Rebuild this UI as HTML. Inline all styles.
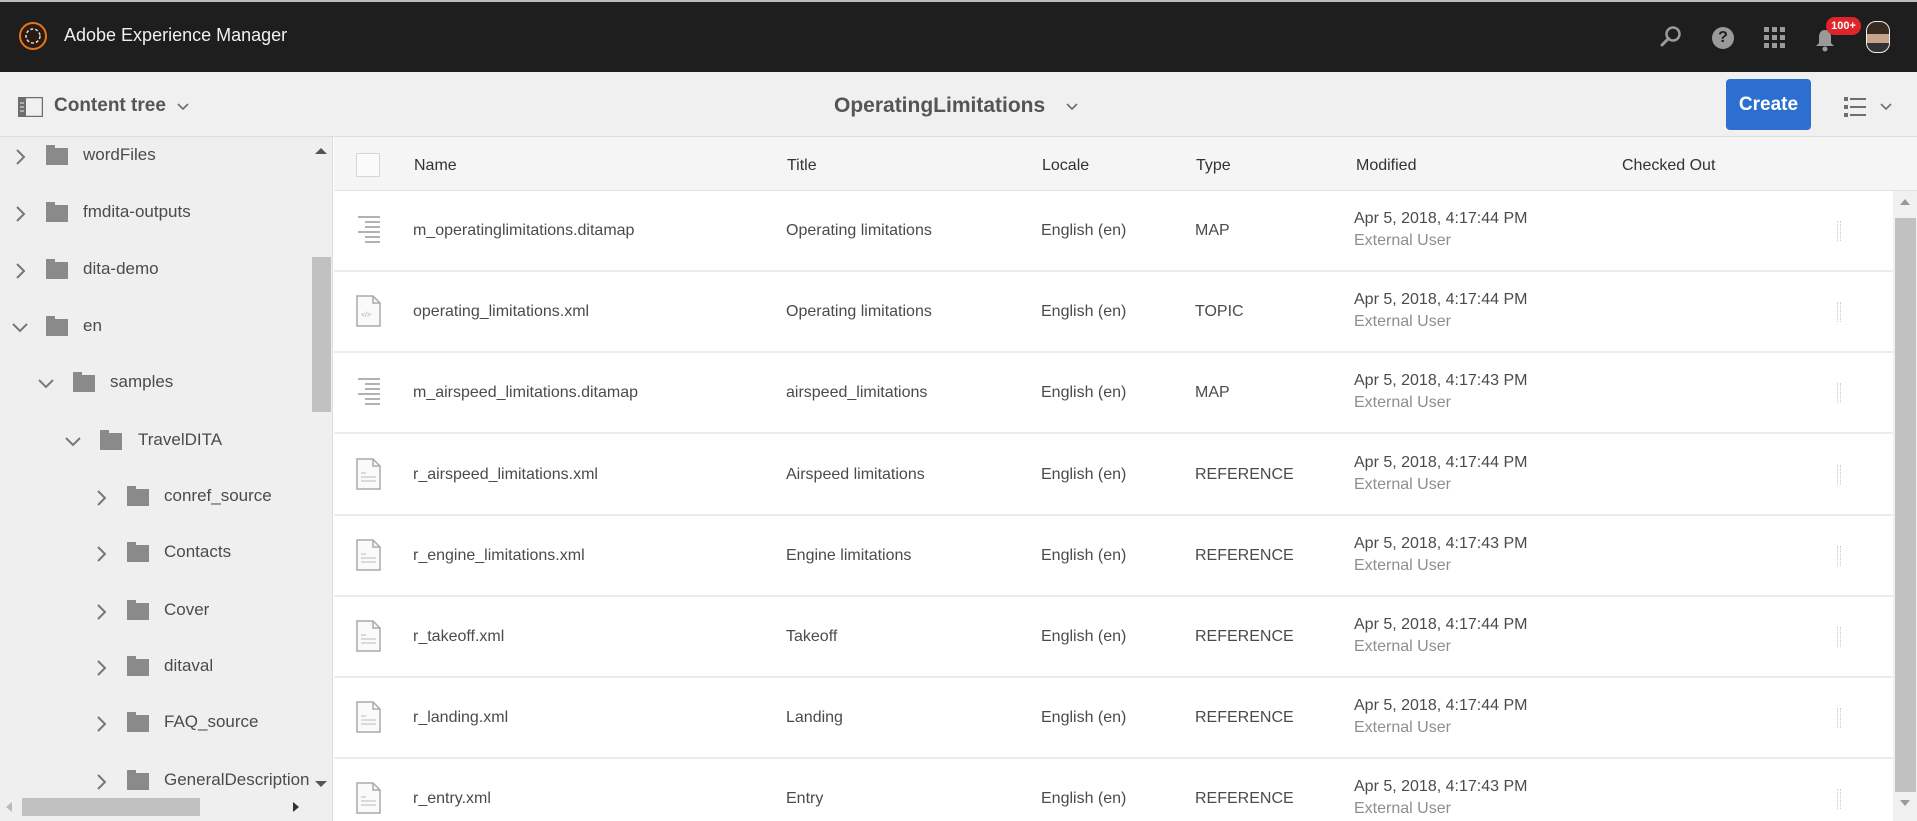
<!DOCTYPE html>
<html><head><meta charset="utf-8"><style>
*{margin:0;padding:0;box-sizing:border-box}
html,body{width:1917px;height:821px;overflow:hidden}
body{background:#fff;font-family:"Liberation Sans",sans-serif;color:#4b4b4b;position:relative}
.a{position:absolute;white-space:nowrap}
.top{left:0;top:0;width:1917px;height:72px;background:#1e1e1e;border-top:2px solid #bdbdbd}
.tb{left:0;top:72px;width:1917px;height:65px;background:#f0f0f0;border-bottom:1px solid #ddd}
.side{left:0;top:137px;width:333px;height:684px;background:#efefef;border-right:1px solid #ddd;overflow:hidden}
.hdr{left:334px;top:137px;width:1583px;height:54px;background:#f5f5f5;border-bottom:1px solid #e4e4e4}
.hdr span{position:absolute;top:20px;font-size:16px;color:#323232}
.row{position:absolute;left:334px;width:1559px;height:81px;border-bottom:2px solid #ececec;background:#fff}
.row span{position:absolute;font-size:16px;color:#4b4b4b;top:31px}
.row .m1{top:19px}.row .m2{top:41px;color:#8e8e8e}
.si{position:absolute;height:24px;font-size:17px;color:#4b4b4b}
.fold{position:absolute;width:22px;height:17px;background:#8a8a8a;top:3px}
.fold:before{content:"";position:absolute;left:0;top:-3px;width:9px;height:3px;background:#8a8a8a}
.chev{position:absolute;top:0;width:20px;height:20px}
</style></head><body>
<div class="a top"></div>
<svg class="a" style="left:18px;top:21px" width="30" height="30" viewBox="0 0 30 30"><circle cx="15" cy="15" r="13" fill="#2a1a10" stroke="#e8751a" stroke-width="2"/><circle cx="15" cy="15" r="7" fill="none" stroke="#ddd" stroke-width="1.5" stroke-dasharray="3 2"/></svg>
<div class="a" style="left:64px;top:25px;font-size:18px;color:#f0f0f0">Adobe Experience Manager</div>
<svg class="a" style="left:1659px;top:25px" width="24" height="24" viewBox="0 0 24 24"><circle cx="14" cy="9" r="6.5" fill="none" stroke="#9a9a9a" stroke-width="2.5"/><path d="M9.5 13.5L3 20" stroke="#9a9a9a" stroke-width="3" stroke-linecap="round"/></svg>
<div class="a" style="left:1712px;top:27px;width:22px;height:22px;border-radius:50%;background:#9a9a9a;color:#1e1e1e;font-weight:bold;font-size:16px;text-align:center;line-height:22px">?</div>
<svg class="a" style="left:1764px;top:27px" width="22" height="22"><g fill="#9a9a9a"><rect x="0" y="0" width="5" height="5"/><rect x="8" y="0" width="5" height="5"/><rect x="16" y="0" width="5" height="5"/><rect x="0" y="8" width="5" height="5"/><rect x="8" y="8" width="5" height="5"/><rect x="16" y="8" width="5" height="5"/><rect x="0" y="16" width="5" height="5"/><rect x="8" y="16" width="5" height="5"/><rect x="16" y="16" width="5" height="5"/></g></svg>
<svg class="a" style="left:1814px;top:28px" width="22" height="24" viewBox="0 0 22 24"><path d="M11 2c-4 0-6 3-6 7v6l-3 3h18l-3-3V9c0-4-2-7-6-7z" fill="#9a9a9a"/><circle cx="11" cy="21" r="2.5" fill="#9a9a9a"/></svg>
<div class="a" style="left:1826px;top:17px;width:35px;height:18px;border-radius:9px;background:#e0242b;color:#fff;font-size:11px;font-weight:bold;text-align:center;line-height:18px">100+</div>
<div class="a" style="left:1866px;top:21px;width:24px;height:32px;border-radius:10px;background:linear-gradient(#3a2a22 40%,#c9a48c 40%,#c9a48c 70%,#333 70%);border:1px solid #eee"></div>

<div class="a tb"></div>
<svg class="a" style="left:18px;top:97px" width="25" height="20"><rect x="0.5" y="0.5" width="24" height="19" fill="none" stroke="#6e6e6e" stroke-width="1.5"/><rect x="0" y="0" width="8" height="20" fill="#6e6e6e"/><g stroke="#f0f0f0"><line x1="2" y1="6" x2="6" y2="6"/><line x1="2" y1="10" x2="6" y2="10"/><line x1="2" y1="14" x2="6" y2="14"/></g></svg>
<div class="a" style="left:54px;top:95px;font-size:19px;font-weight:bold;color:#555">Content tree</div>
<svg class="a" style="left:177px;top:103px" width="12" height="8"><path d="M1 1l5 5 5-5" fill="none" stroke="#6e6e6e" stroke-width="1.6"/></svg>
<div class="a" style="left:834px;top:94px;font-size:21px;font-weight:bold;color:#555">OperatingLimitations</div>
<svg class="a" style="left:1066px;top:103px" width="12" height="8"><path d="M1 1l5 5 5-5" fill="none" stroke="#6e6e6e" stroke-width="1.6"/></svg>
<div class="a" style="left:1726px;top:79px;width:85px;height:51px;background:#2d6fd0;border-radius:4px;color:#fff;font-size:19px;font-weight:bold;text-align:center;line-height:51px">Create</div>
<svg class="a" style="left:1844px;top:97px" width="22" height="21"><g fill="#6e6e6e"><rect x="0" y="0" width="4" height="4"/><rect x="6" y="1" width="16" height="2"/><rect x="0" y="8" width="4" height="4"/><rect x="6" y="9" width="16" height="2"/><rect x="0" y="16" width="4" height="4"/><rect x="6" y="17" width="16" height="2"/></g></svg>
<svg class="a" style="left:1880px;top:103px" width="12" height="8"><path d="M1 1l5 5 5-5" fill="none" stroke="#6e6e6e" stroke-width="1.6"/></svg>

<div class="a side">
<div class="si" style="left:0;top:8px;width:333px">
<svg class="chev" style="left:12px;top:2px"><path d="M5 3l7 7-7 7" fill="none" stroke="#777" stroke-width="2"/></svg>
<div class="fold" style="left:46px"></div><span style="position:absolute;left:83px;top:0">wordFiles</span></div>
<svg class="a" style="left:315px;top:10px" width="12" height="8"><path d="M0 7L6 1 12 7z" fill="#555"/></svg>
<div class="si" style="left:0;top:65px"><svg class="chev" style="left:12px;top:2px"><path d="M5 3l7 7-7 7" fill="none" stroke="#777" stroke-width="2"/></svg><div class="fold" style="left:46px"></div><span style="position:absolute;left:83px">fmdita-outputs</span></div>
<div class="si" style="left:0;top:122px"><svg class="chev" style="left:12px;top:2px"><path d="M5 3l7 7-7 7" fill="none" stroke="#777" stroke-width="2"/></svg><div class="fold" style="left:46px"></div><span style="position:absolute;left:83px">dita-demo</span></div>
<div class="si" style="left:0;top:179px"><svg class="chev" style="left:10px;top:2px"><path d="M3 6l7 7 7-7" fill="none" stroke="#777" stroke-width="2"/></svg><div class="fold" style="left:46px"></div><span style="position:absolute;left:83px">en</span></div>
<div class="si" style="left:0;top:235px"><svg class="chev" style="left:36px;top:2px"><path d="M3 6l7 7 7-7" fill="none" stroke="#777" stroke-width="2"/></svg><div class="fold" style="left:73px"></div><span style="position:absolute;left:110px">samples</span></div>
<div class="si" style="left:0;top:293px"><svg class="chev" style="left:63px;top:2px"><path d="M3 6l7 7 7-7" fill="none" stroke="#777" stroke-width="2"/></svg><div class="fold" style="left:100px"></div><span style="position:absolute;left:138px">TravelDITA</span></div>
<div class="si" style="left:0;top:349px"><svg class="chev" style="left:93px;top:2px"><path d="M5 3l7 7-7 7" fill="none" stroke="#777" stroke-width="2"/></svg><div class="fold" style="left:127px"></div><span style="position:absolute;left:164px">conref_source</span></div>
<div class="si" style="left:0;top:405px"><svg class="chev" style="left:93px;top:2px"><path d="M5 3l7 7-7 7" fill="none" stroke="#777" stroke-width="2"/></svg><div class="fold" style="left:127px"></div><span style="position:absolute;left:164px">Contacts</span></div>
<div class="si" style="left:0;top:463px"><svg class="chev" style="left:93px;top:2px"><path d="M5 3l7 7-7 7" fill="none" stroke="#777" stroke-width="2"/></svg><div class="fold" style="left:127px"></div><span style="position:absolute;left:164px">Cover</span></div>
<div class="si" style="left:0;top:519px"><svg class="chev" style="left:93px;top:2px"><path d="M5 3l7 7-7 7" fill="none" stroke="#777" stroke-width="2"/></svg><div class="fold" style="left:127px"></div><span style="position:absolute;left:164px">ditaval</span></div>
<div class="si" style="left:0;top:575px"><svg class="chev" style="left:93px;top:2px"><path d="M5 3l7 7-7 7" fill="none" stroke="#777" stroke-width="2"/></svg><div class="fold" style="left:127px"></div><span style="position:absolute;left:164px">FAQ_source</span></div>
<div class="si" style="left:0;top:633px"><svg class="chev" style="left:93px;top:2px"><path d="M5 3l7 7-7 7" fill="none" stroke="#777" stroke-width="2"/></svg><div class="fold" style="left:127px"></div><span style="position:absolute;left:164px">GeneralDescription</span></div>
<div class="a" style="left:312px;top:120px;width:19px;height:155px;background:#c1c1c1"></div>
<svg class="a" style="left:315px;top:643px" width="12" height="8"><path d="M0 1L6 7 12 1z" fill="#555"/></svg>
<div class="a" style="left:0;top:660px;width:312px;height:24px;background:#efefef"></div>
<div class="a" style="left:22px;top:661px;width:178px;height:18px;background:#c1c1c1"></div>
<svg class="a" style="left:6px;top:665px" width="6" height="10"><path d="M6 0L0 5 6 10z" fill="#bbb"/></svg>
<svg class="a" style="left:293px;top:665px" width="6" height="10"><path d="M0 0L6 5 0 10z" fill="#333"/></svg>
</div>

<div class="a hdr">
<div style="position:absolute;left:22px;top:16px;width:24px;height:24px;border:1px solid #d5d5d5;background:#fafafa"></div>
<span style="left:80px">Name</span><span style="left:453px">Title</span><span style="left:708px">Locale</span><span style="left:862px">Type</span><span style="left:1022px">Modified</span><span style="left:1288px">Checked Out</span>
</div>

<div id="rows"></div>
<div class="a" style="left:1893px;top:191px;width:24px;height:630px;background:#f0f0f0"></div>
<div class="a" style="left:1895px;top:218px;width:21px;height:574px;background:#c1c1c1"></div>
<svg class="a" style="left:1900px;top:199px" width="10" height="6"><path d="M0 6L5 0 10 6z" fill="#999"/></svg>
<svg class="a" style="left:1900px;top:800px" width="10" height="6"><path d="M0 0L5 6 10 0z" fill="#999"/></svg>

<script>
var d=[["map","m_operatinglimitations.ditamap","Operating limitations","MAP","44"],
["topic","operating_limitations.xml","Operating limitations","TOPIC","44"],
["map","m_airspeed_limitations.ditamap","airspeed_limitations","MAP","43"],
["doc","r_airspeed_limitations.xml","Airspeed limitations","REFERENCE","44"],
["doc","r_engine_limitations.xml","Engine limitations","REFERENCE","43"],
["doc","r_takeoff.xml","Takeoff","REFERENCE","44"],
["doc","r_landing.xml","Landing","REFERENCE","44"],
["doc","r_entry.xml","Entry","REFERENCE","43"]];
var h="";
d.forEach(function(r,i){
var top=191+i*81.2;
var ic;
if(r[0]=="map"){ic='<svg style="position:absolute;left:22px;top:24px" width="26" height="30"><g stroke="#999" stroke-width="1.5"><line x1="2" y1="2" x2="24" y2="2"/><line x1="9" y1="7" x2="24" y2="7"/><line x1="9" y1="12" x2="24" y2="12"/><line x1="2" y1="17" x2="24" y2="17"/><line x1="9" y1="22" x2="24" y2="22"/><line x1="9" y1="27" x2="24" y2="27"/></g></svg>';}
else{ic='<svg style="position:absolute;left:22px;top:23px" width="26" height="32"><path d="M1 1h16l7 7v23H1z" fill="#fafafa" stroke="#aaa" stroke-width="1.5"/><path d="M17 1v7h7" fill="none" stroke="#aaa" stroke-width="1.5"/>'+(r[0]=="topic"?'<text x="5" y="22" font-size="7" fill="#aaa" font-family="Liberation Sans">&lt;/&gt;</text>':'<g stroke="#bbb"><line x1="5" y1="15" x2="10" y2="15"/><line x1="5" y1="19" x2="20" y2="19"/><line x1="5" y1="23" x2="20" y2="23"/></g>')+'</svg>';}
h+='<div class="row" style="top:'+top+'px">'+ic+'<span style="left:79px">'+r[1]+'</span><span style="left:452px">'+r[2]+'</span><span style="left:707px">English (en)</span><span style="left:861px">'+r[3]+'</span><span class="m1" style="left:1020px">Apr 5, 2018, 4:17:'+r[4]+' PM</span><span class="m2" style="left:1020px">External User</span><div style="position:absolute;left:1503px;top:30px;width:4px;height:20px;border-left:1px dotted #ccc;border-right:1px dotted #ccc"></div></div>';
});
document.getElementById("rows").innerHTML=h;
</script>
</body></html>
